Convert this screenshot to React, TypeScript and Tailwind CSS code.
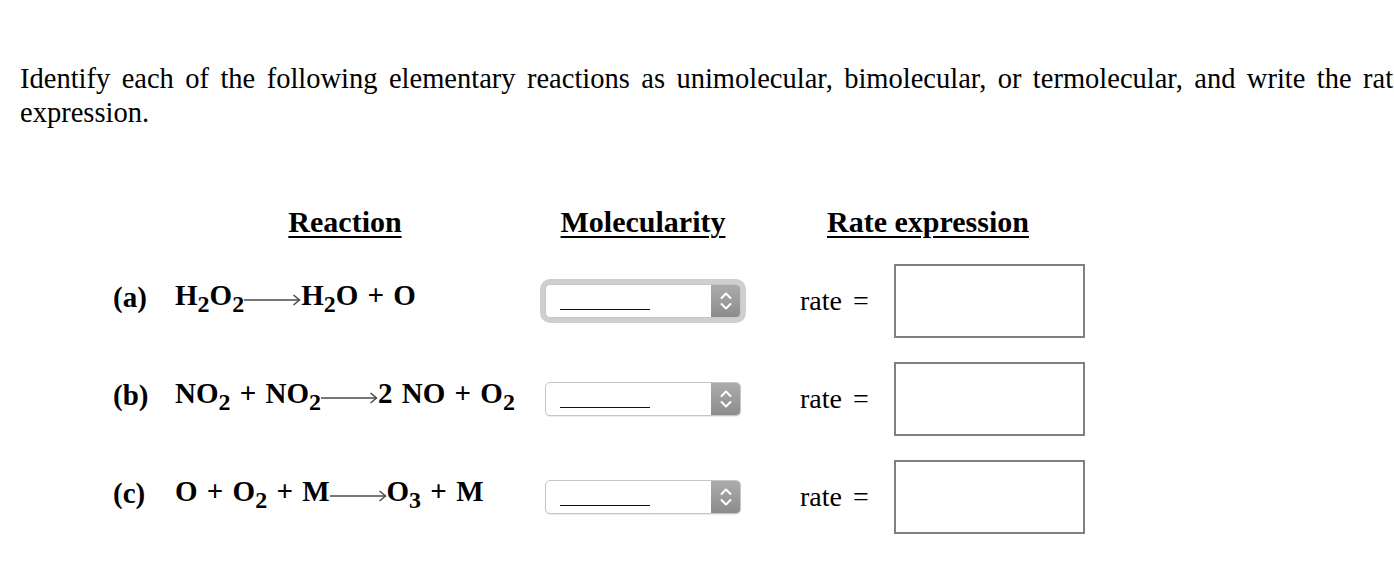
import React from 'react';

const serif = "font-['Liberation_Serif','Times_New_Roman',serif]";

function Sub({ children }: { children: React.ReactNode }) {
  return <span className="text-[24px] align-[-7px] leading-none">{children}</span>;
}

function Arrow() {
  return (
    <svg width="57" height="14" viewBox="0 0 57 14" className="inline-block align-[-2px]">
      <line x1="0" y1="7" x2="55" y2="7" stroke="#4a4a4a" strokeWidth="1.6" />
      <path d="M49.5 2 L55.5 7 L49.5 12" fill="none" stroke="#4a4a4a" strokeWidth="1.5" />
    </svg>
  );
}

function SelectBox({ focused }: { focused?: boolean }) {
  return (
    <div
      className={
        'relative flex h-[34px] w-[196px] overflow-hidden rounded-[5px] border border-[#c6c6c6] bg-white ' +
        (focused ? 'shadow-[0_0_0_5px_#cfcfcf]' : 'shadow-[0_1px_1px_rgba(0,0,0,0.08)]')
      }
    >
      <div className="flex flex-1 items-end pb-[7px] pl-[14px]">
        <div className="h-[1.5px] w-[90px] bg-[#111]" />
      </div>
      <div className="flex w-[29px] items-center justify-center bg-gradient-to-b from-[#acacac] to-[#8c8c8c]">
        <svg width="14" height="22" viewBox="0 0 14 22">
          <path d="M2.5 8 L7 3.5 L11.5 8" fill="none" stroke="white" strokeWidth="2" strokeLinecap="round" strokeLinejoin="round" />
          <path d="M2.5 14 L7 18.5 L11.5 14" fill="none" stroke="white" strokeWidth="2" strokeLinecap="round" strokeLinejoin="round" />
        </svg>
      </div>
    </div>
  );
}

function Row({ label, reaction, focused }: { label: string; reaction: React.ReactNode; focused?: boolean }) {
  return (
    <div className="flex h-[74px] items-center pl-[113px]">
      <div className="mb-[8px] w-[62px] text-[29px] font-bold leading-[34px]">{label}</div>
      <div className="mb-[8px] w-[370px] whitespace-nowrap text-[29px] font-bold leading-[34px] [word-spacing:2px]">{reaction}</div>
      <SelectBox focused={focused} />
      <div className="ml-[59px] w-[94px] whitespace-nowrap text-[28px] leading-[34px] [word-spacing:4px]">rate =</div>
      <div className="h-[74px] w-[191px] border-2 border-[#808080] bg-white" />
    </div>
  );
}

export default function App() {
  return (
    <div className={`h-[562px] w-[1394px] overflow-hidden bg-white text-black ${serif}`}>
      <p className="ml-[20px] mt-[62px] w-[1430px] text-[28.5px] leading-[34px] [word-spacing:4.3px]">
        Identify each of the following elementary reactions as unimolecular, bimolecular, or termolecular, and write the rate expression.
      </p>

      <div className="mt-[75px] flex whitespace-nowrap pl-[245px] text-[30px] font-bold leading-[34px]">
        <div className="w-[200px] text-center underline decoration-[2px] underline-offset-[4px]">Reaction</div>
        <div className="ml-[98px] w-[200px] text-center underline decoration-[2px] underline-offset-[4px]">Molecularity</div>
        <div className="ml-[84px] w-[200px] text-center underline decoration-[2px] underline-offset-[4px]">Rate expression</div>
      </div>

      <div className="mt-[25px] flex flex-col gap-[24px]">
        <Row
          label="(a)"
          focused
          reaction={
            <>
              H<Sub>2</Sub>O<Sub>2</Sub>
              <Arrow />
              H<Sub>2</Sub>O + O
            </>
          }
        />
        <Row
          label="(b)"
          reaction={
            <>
              NO<Sub>2</Sub> + NO<Sub>2</Sub>
              <Arrow />2 NO + O<Sub>2</Sub>
            </>
          }
        />
        <Row
          label="(c)"
          reaction={
            <>
              O + O<Sub>2</Sub> + M
              <Arrow />O<Sub>3</Sub> + M
            </>
          }
        />
      </div>
    </div>
  );
}
